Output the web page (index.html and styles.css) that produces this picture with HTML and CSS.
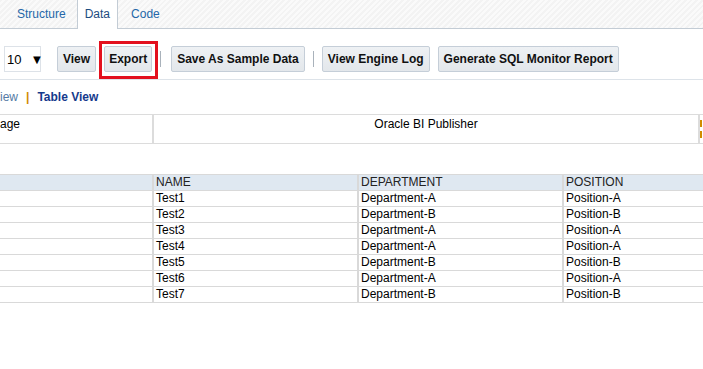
FILE: index.html
```html
<!DOCTYPE html>
<html lang="en">
<head>
    <meta charset="UTF-8">
    <title>Data Model - Data</title>
    <link rel="stylesheet" href="styles.css">
</head>
<body>
    <div class="tabs">
        <span class="tab">Structure</span>
        <span class="tab active">Data</span>
        <span class="tab code">Code</span>
    </div>

    <div class="toolbar">
        <div class="rows-select"><span>10</span><span class="arrow">▼</span></div>
        <button class="btn first">View</button>
        <button class="btn marked">Export</button>
        <span class="sep wide"></span>
        <button class="btn">Save As Sample Data</button>
        <span class="sep"></span>
        <button class="btn">View Engine Log</button>
        <button class="btn">Generate SQL Monitor Report</button>
    </div>

    <div class="view-switch">
        <span class="view-link">iew</span>
        <span class="bar">|</span>
        <span class="view-current">Table View</span>
    </div>

    <table class="header-table">
        <colgroup>
            <col style="width: 153px">
            <col style="width: 546px">
            <col style="width: 20px">
        </colgroup>
        <tr>
            <td class="left">age</td>
            <td class="center">Oracle BI Publisher</td>
            <td class="marks"><span></span><span></span></td>
        </tr>
    </table>

    <table class="data-table">
        <colgroup>
            <col style="width: 153px">
            <col style="width: 205px">
            <col style="width: 205px">
            <col style="width: 220px">
        </colgroup>
        <thead>
            <tr><th></th><th>NAME</th><th>DEPARTMENT</th><th>POSITION</th></tr>
        </thead>
        <tbody>
            <tr><td></td><td>Test1</td><td>Department-A</td><td>Position-A</td></tr>
            <tr><td></td><td>Test2</td><td>Department-B</td><td>Position-B</td></tr>
            <tr><td></td><td>Test3</td><td>Department-A</td><td>Position-A</td></tr>
            <tr><td></td><td>Test4</td><td>Department-A</td><td>Position-A</td></tr>
            <tr><td></td><td>Test5</td><td>Department-B</td><td>Position-B</td></tr>
            <tr><td></td><td>Test6</td><td>Department-A</td><td>Position-A</td></tr>
            <tr><td></td><td>Test7</td><td>Department-B</td><td>Position-B</td></tr>
        </tbody>
    </table>
</body>
</html>
```

FILE: styles.css
```css
body {
    margin: 0;
    overflow: hidden;
    background: #fff;
    font-family: 'Liberation Sans', Arial, sans-serif;
    font-size: 12px;
    color: #000;
}

/* tab strip */
.tabs {
    display: flex;
    height: 28px;
    padding-left: 17px;
    border-bottom: 1px solid #c3ccd5;
    background: repeating-linear-gradient(135deg, #f3f3f3 0 2px, #fafafa 2px 4px);
}

.tab {
    line-height: 28px;
    font-size: 12px;
    color: #2467a8;
    margin-right: 11px;
}

.tab.active {
    background: #fff;
    color: #1d4c80;
    padding: 0 7px;
    height: 29px;
    margin-right: 0;
    border-left: 1px solid #c3ccd5;
    border-right: 1px solid #c3ccd5;
}

.tab.code {
    margin-left: 13px;
}

/* toolbar */
.toolbar {
    display: flex;
    align-items: center;
    gap: 8px;
    padding: 17px 0 7px 4px;
    border-bottom: 1px solid #dde3e9;
}

.rows-select {
    display: flex;
    align-items: center;
    box-sizing: border-box;
    width: 37px;
    height: 26px;
    padding-left: 2px;
    border: 1px solid #dde2e8;
    font-size: 13px;
}

.rows-select .arrow {
    margin-left: 9px;
    font-size: 13px;
}

.btn {
    box-sizing: border-box;
    height: 26px;
    padding: 0 5px;
    border: 1px solid #c5ced8;
    border-radius: 2px;
    background: linear-gradient(#eef1f4, #e3e7eb);
    font-family: 'Liberation Sans', Arial, sans-serif;
    font-size: 12px;
    font-weight: bold;
    color: #111;
}

.btn.first {
    margin-left: 8px;
}

/* red annotation box drawn over the Export button */
.btn.marked {
    position: relative;
    padding: 0 4px;
}

.btn.marked::after {
    content: "";
    position: absolute;
    left: -6px;
    right: -7px;
    top: -6px;
    bottom: -8px;
    border: 3px solid #e3101e;
}

.sep {
    width: 1px;
    height: 16px;
    background: #a9b2bb;
}

.sep.wide {
    margin-right: 2px;
}

/* xml / table view switch */
.view-switch {
    display: flex;
    align-items: center;
    height: 34px;
    font-size: 12px;
}

.view-link {
    color: #557aa5;
}

.bar {
    color: #d18c00;
    margin: 0 8px;
    font-weight: bold;
}

.view-current {
    color: #153a8c;
    font-weight: bold;
}

/* report header */
.header-table {
    border-collapse: collapse;
    table-layout: fixed;
    width: 719px;
}

.header-table td {
    height: 26px;
    padding: 2px 0 0 0;
    vertical-align: top;
    border-top: 1px solid #dcdcdc;
    border-bottom: 1px solid #dcdcdc;
    border-right: 2px solid #dcdcdc;
    font-size: 12px;
}

.header-table .center {
    text-align: center;
}

.header-table .marks span {
    display: block;
    width: 2px;
    height: 7px;
    margin: 3px 0 4px 0;
    background: #d18c00;
}

/* data grid */
.data-table {
    border-collapse: collapse;
    table-layout: fixed;
    width: 783px;
    margin-top: 30px;
}

.data-table th,
.data-table td {
    height: 15px;
    padding: 0 2px;
    line-height: 15px;
    text-align: left;
    font-size: 12px;
    font-weight: normal;
    border: 1px solid #d9d9d9;
    border-left: none;
    border-right: 2px solid #d9d9d9;
    white-space: nowrap;
}

.data-table th {
    background: #dfe8f1;
    color: #222;
}
```
